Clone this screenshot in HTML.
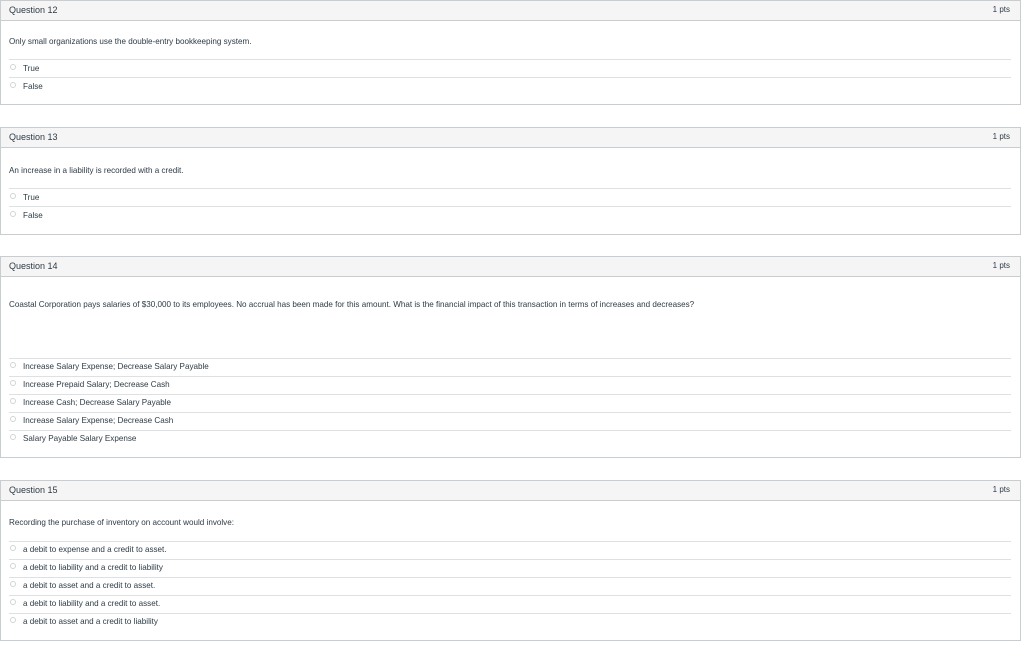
<!DOCTYPE html>
<html><head><style>
*{margin:0;padding:0;box-sizing:border-box}
body{width:1024px;height:650px;background:#fff;font-family:"Liberation Sans",sans-serif;color:#2d3b45;position:relative;overflow:hidden}
.card{position:absolute;left:0;width:1021px;border:1px solid #c7cdd1;background:#fff}
.hd{position:absolute;left:0;right:0;top:0;height:20px;background:#f5f5f5;border-bottom:1px solid #c7cdd1;font-size:9px;line-height:18px;padding-left:8px;color:#2d3b45}
.hd span{position:absolute;right:10px;top:0;font-size:8px}
.t{position:absolute;left:8px;font-size:8.1px;color:#2d3b45;white-space:nowrap}
.ln{position:absolute;left:8px;width:1002px;border-top:1px solid #dde1e4}
.o{position:absolute;left:9px;font-size:8.1px;color:#2d3b45;white-space:nowrap}
.o:before{content:"";display:inline-block;width:4px;height:4px;border:1px solid #d0d4d7;border-radius:50%;margin-right:7px;vertical-align:1px}
</style></head><body>

<div class="card" style="top:0;height:105px">
<div class="hd">Question 12<span>1 pts</span></div>
<div class="t" style="top:36px">Only small organizations use the double-entry bookkeeping system.</div>
<div class="ln" style="top:58px"></div><div class="o" style="top:63px">True</div>
<div class="ln" style="top:76px"></div><div class="o" style="top:81px">False</div>
</div>

<div class="card" style="top:127px;height:108px">
<div class="hd">Question 13<span>1 pts</span></div>
<div class="t" style="top:38px">An increase in a liability is recorded with a credit.</div>
<div class="ln" style="top:60px"></div><div class="o" style="top:65px">True</div>
<div class="ln" style="top:78px"></div><div class="o" style="top:83px">False</div>
</div>

<div class="card" style="top:256px;height:202px">
<div class="hd">Question 14<span>1 pts</span></div>
<div class="t" style="top:43px">Coastal Corporation pays salaries of $30,000 to its employees. No accrual has been made for this amount. What is the financial impact of this transaction in terms of increases and decreases?</div>
<div class="ln" style="top:101px"></div><div class="o" style="top:105px">Increase Salary Expense; Decrease Salary Payable</div>
<div class="ln" style="top:119px"></div><div class="o" style="top:123px">Increase Prepaid Salary; Decrease Cash</div>
<div class="ln" style="top:137px"></div><div class="o" style="top:141px">Increase Cash; Decrease Salary Payable</div>
<div class="ln" style="top:155px"></div><div class="o" style="top:159px">Increase Salary Expense; Decrease Cash</div>
<div class="ln" style="top:173px"></div><div class="o" style="top:177px">Salary Payable Salary Expense</div>
</div>

<div class="card" style="top:480px;height:161px">
<div class="hd">Question 15<span>1 pts</span></div>
<div class="t" style="top:37px">Recording the purchase of inventory on account would involve:</div>
<div class="ln" style="top:60px"></div><div class="o" style="top:64px">a debit to expense and a credit to asset.</div>
<div class="ln" style="top:78px"></div><div class="o" style="top:82px">a debit to liability and a credit to liability</div>
<div class="ln" style="top:96px"></div><div class="o" style="top:100px">a debit to asset and a credit to asset.</div>
<div class="ln" style="top:114px"></div><div class="o" style="top:118px">a debit to liability and a credit to asset.</div>
<div class="ln" style="top:132px"></div><div class="o" style="top:136px">a debit to asset and a credit to liability</div>
</div>

</body></html>
